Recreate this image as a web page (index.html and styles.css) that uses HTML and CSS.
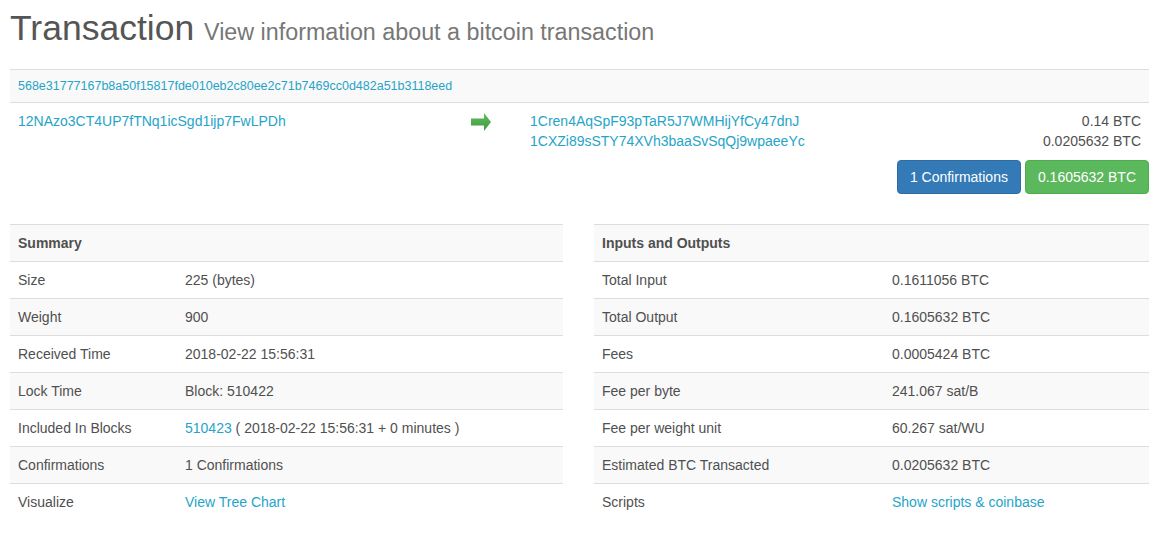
FILE: index.html
```html
<!DOCTYPE html>
<html lang="en">
<head>
  <meta charset="UTF-8" />
  <title>Transaction</title>
  <link rel="stylesheet" href="styles.css">
</head>
<body>

  <!-- page header -->
  <h1 class="page-title">Transaction <small>View information about a bitcoin transaction</small></h1>

  <!-- tx overview -->
  <table class="tx-table">
    <tr class="tx-hash-row">
      <th colspan="3"><a href="#" class="hash-link">568e31777167b8a50f15817fde010eb2c80ee2c71b7469cc0d482a51b3118eed</a></th>
    </tr>
    <tr>
      <td class="tx-in"><a href="#">12NAzo3CT4UP7fTNq1icSgd1ijp7FwLPDh</a></td>
      <td class="tx-arrow">
        <svg width="22" height="20" viewBox="0 0 22 20">
          <defs>
            <linearGradient id="arrowGrad" x1="0" y1="0" x2="0" y2="1">
              <stop offset="0" stop-color="#62bb5e"/>
              <stop offset="1" stop-color="#3f9a3f"/>
            </linearGradient>
          </defs>
          <path d="M1 6.5 H14 V1 L21 10 L14 19 V13.5 H1 Z" fill="url(#arrowGrad)"/>
        </svg>
      </td>
      <td class="tx-out">
        <div class="out-line"><a href="#">1Cren4AqSpF93pTaR5J7WMHijYfCy47dnJ</a><span>0.14 BTC</span></div>
        <div class="out-line"><a href="#">1CXZi89sSTY74XVh3baaSvSqQj9wpaeeYc</a><span>0.0205632 BTC</span></div>
      </td>
    </tr>
  </table>

  <div class="tx-buttons">
    <button class="btn btn-primary">1 Confirmations</button>
    <button class="btn btn-success">0.1605632 BTC</button>
  </div>

  <!-- details -->
  <div class="details">
    <table class="info-table">
      <tr><th colspan="2">Summary</th></tr>
      <tr><td>Size</td><td>225 (bytes)</td></tr>
      <tr><td>Weight</td><td>900</td></tr>
      <tr><td>Received Time</td><td>2018-02-22 15:56:31</td></tr>
      <tr><td>Lock Time</td><td>Block: 510422</td></tr>
      <tr><td>Included In Blocks</td><td><a href="#">510423</a> ( 2018-02-22 15:56:31 + 0 minutes )</td></tr>
      <tr><td>Confirmations</td><td>1 Confirmations</td></tr>
      <tr><td>Visualize</td><td><a href="#">View Tree Chart</a></td></tr>
    </table>

    <table class="info-table wide-label">
      <tr><th colspan="2">Inputs and Outputs</th></tr>
      <tr><td>Total Input</td><td>0.1611056 BTC</td></tr>
      <tr><td>Total Output</td><td>0.1605632 BTC</td></tr>
      <tr><td>Fees</td><td>0.0005424 BTC</td></tr>
      <tr><td>Fee per byte</td><td>241.067 sat/B</td></tr>
      <tr><td>Fee per weight unit</td><td>60.267 sat/WU</td></tr>
      <tr><td>Estimated BTC Transacted</td><td>0.0205632 BTC</td></tr>
      <tr><td>Scripts</td><td><a href="#">Show scripts &amp; coinbase</a></td></tr>
    </table>
  </div>

</body>
</html>
```

FILE: styles.css
```css
body {
  font-family: 'Liberation Sans', Arial, sans-serif;
  font-size: 14px;
  line-height: 20px;
  color: #505050;
  background: #fff;
  margin: 0;
  padding: 8px 11px 0 10px;
}

a {
  color: #26a4c7;
  text-decoration: none;
}

.page-title {
  font-size: 35.5px;
  font-weight: normal;
  line-height: 40px;
  color: #555;
  margin: 0 0 17px;
}

.page-title small {
  font-size: 23.3px;
  color: #777;
}

table {
  border-collapse: collapse;
  border-spacing: 0;
  width: 100%;
}

.tx-table th,
.tx-table td {
  padding: 8px;
  text-align: left;
  vertical-align: top;
}

.tx-hash-row th {
  background: #f9f9f9;
  border-top: 1px solid #ddd;
  border-bottom: 1px solid #ddd;
  font-weight: normal;
  font-size: 12.5px;
  line-height: 16px;
}

.tx-in {
  width: 436px;
}

.tx-arrow {
  width: 44px;
}

.tx-arrow svg {
  display: block;
  margin-top: 1px;
}

.out-line {
  display: flex;
  justify-content: space-between;
}

.tx-buttons {
  display: flex;
  justify-content: flex-end;
  gap: 4px;
  margin-top: 1px;
  padding-bottom: 30px;
}

.btn {
  font-family: inherit;
  font-size: 14px;
  line-height: 20px;
  padding: 6px 12px;
  border: 1px solid transparent;
  border-radius: 4px;
  color: #fff;
  cursor: pointer;
}

.btn-primary {
  background: #337ab7;
  border-color: #2e6da4;
}

.btn-success {
  background: #5cb85c;
  border-color: #4cae4c;
}

.details {
  display: grid;
  grid-template-columns: 553px 555px;
  gap: 31px;
}

.info-table th,
.info-table td {
  padding: 8px;
  text-align: left;
  border-top: 1px solid #ddd;
}

.info-table th {
  font-weight: bold;
}

.info-table tr:nth-child(odd) {
  background: #f9f9f9;
}

.info-table td:first-child {
  width: 151px;
}

.wide-label td:first-child {
  width: 274px;
}
```
